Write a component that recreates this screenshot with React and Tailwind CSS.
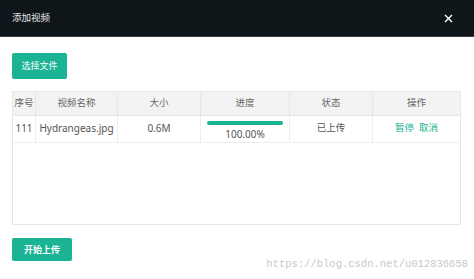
export default function App() {
  const font = { fontFamily: '"Noto Sans", "Noto Sans CJK SC", sans-serif' };
  const cols = ["w-[23px]", "w-[82px]", "w-[83px]", "w-[89px]", "w-[83px]", "flex-1"];
  return (
    <div className="relative w-[474px] h-[279px] bg-white overflow-hidden text-[#555]" style={font}>
      <div className="h-[37px] bg-[#0e1619] flex items-center justify-between pl-[12px] pr-[21px] border-b border-[#3a3f42]">
        <span className="text-[9.5px] text-[#e6e6e6]">添加视频</span>
        <svg width="9" height="9" viewBox="0 0 9 9">
          <path d="M1 1L8 8M8 1L1 8" stroke="#fff" strokeWidth="1.4" />
        </svg>
      </div>
      <div className="px-[12px] pt-[14px]">
        <button className="w-[55px] h-[26px] bg-[#1ab394] rounded-[2px] text-white text-[9px] leading-none">选择文件</button>
        <div className="mt-[12px] w-[449px] h-[134px] border border-[#e7e7e7] flex flex-col">
          <div className="flex h-[24px] bg-[#f3f3f3] border-b border-[#e7e7e7] text-[9.5px] text-[#666]">
            {["序号", "视频名称", "大小", "进度", "状态", "操作"].map((t, i) => (
              <div key={i} className={`${cols[i]} flex items-center justify-center ${i < 5 ? "border-r border-[#e7e7e7]" : ""}`}>{t}</div>
            ))}
          </div>
          <div className="flex h-[27px] border-b border-[#eeeeee] text-[10px] text-[#555]">
            <div className="w-[23px] flex items-center justify-center border-r border-[#eeeeee]">111</div>
            <div className="w-[82px] flex items-center justify-center border-r border-[#eeeeee]">Hydrangeas.jpg</div>
            <div className="w-[83px] flex items-center justify-center border-r border-[#eeeeee]">0.6M</div>
            <div className="w-[89px] flex flex-col items-center border-r border-[#eeeeee] pt-[5px]">
              <div className="w-[76px] h-[4px] rounded-full bg-[#1ab394]"></div>
              <div className="text-[10px] leading-none mt-[4px] text-[#555]">100.00%</div>
            </div>
            <div className="w-[83px] flex items-center justify-center border-r border-[#eeeeee] text-[9.5px]">已上传</div>
            <div className="flex-1 flex items-center justify-center gap-[5px] text-[9.5px] text-[#1ab394]">
              <span>暂停</span>
              <span>取消</span>
            </div>
          </div>
        </div>
        <button className="mt-[13px] w-[60px] h-[23px] bg-[#1ab394] rounded-[2px] text-white text-[9px] font-bold leading-none">开始上传</button>
      </div>
      <div className="absolute right-[6px] bottom-[10px] text-[10.5px] text-[#c8c8c8] leading-none" style={{ fontFamily: '"Liberation Mono", monospace' }}>
        https://blog.csdn.net/u012836658
      </div>
    </div>
  );
}
